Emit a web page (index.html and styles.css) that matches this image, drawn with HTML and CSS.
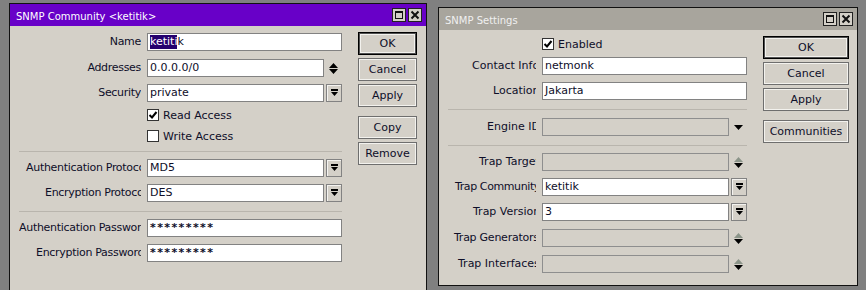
FILE: index.html
```html
<!DOCTYPE html>
<html lang="en">
<head>
    <meta charset="UTF-8">
    <title>SNMP</title>
    <link rel="stylesheet" href="styles.css">
</head>
<body>

<div class="win community">
    <div class="titlebar active">
        <span class="title">SNMP Community &lt;ketitik&gt;</span>
        <div class="tbtns">
            <span class="tbtn"><svg width="10" height="10" viewBox="0 0 10 10"><path d="M1 1h8v8H1z M2 3v5h6V3z" fill="#111" fill-rule="evenodd"/></svg></span>
            <span class="tbtn"><svg width="10" height="10" viewBox="0 0 10 10"><path d="M1.5 1.5l7 7M8.5 1.5l-7 7" stroke="#111" stroke-width="2"/></svg></span>
        </div>
    </div>
    <div class="body">
        <div class="form">
            <div class="row first">
                <div class="lbl">Name</div>
                <div class="field"><div class="input"><span class="sel">ketiti</span>k</div></div>
            </div>
            <div class="row mt8">
                <div class="lbl">Addresses</div>
                <div class="field">
                    <div class="input">0.0.0.0/0</div>
                    <div class="spin"><svg width="9" height="11" viewBox="0 0 9 11"><path d="M4.5 0L9 5H0z M0 6h9L4.5 11z" fill="#000"/></svg></div>
                </div>
            </div>
            <div class="row">
                <div class="lbl">Security</div>
                <div class="field">
                    <div class="input">private</div>
                    <div class="drop"><svg width="7" height="8" viewBox="0 0 7 8"><path d="M0 0h7v2H0z M0 3h7L3.5 7z" fill="#000"/></svg></div>
                </div>
            </div>
            <div class="row check">
                <div class="lbl"></div>
                <div class="field"><span class="box"><svg width="10" height="10" viewBox="0 0 10 10"><path d="M1.5 5l2.5 2.5L8.5 2" stroke="#000" stroke-width="2" fill="none"/></svg></span>Read Access</div>
            </div>
            <div class="row check mt9">
                <div class="lbl"></div>
                <div class="field"><span class="box"></span>Write Access</div>
            </div>
            <div class="sep"></div>
            <div class="row">
                <div class="lbl at-auth-proto">Authentication Protocol</div>
                <div class="field">
                    <div class="input">MD5</div>
                    <div class="drop"><svg width="7" height="8" viewBox="0 0 7 8"><path d="M0 0h7v2H0z M0 3h7L3.5 7z" fill="#000"/></svg></div>
                </div>
            </div>
            <div class="row">
                <div class="lbl at-enc-proto">Encryption Protocol</div>
                <div class="field">
                    <div class="input">DES</div>
                    <div class="drop"><svg width="7" height="8" viewBox="0 0 7 8"><path d="M0 0h7v2H0z M0 3h7L3.5 7z" fill="#000"/></svg></div>
                </div>
            </div>
            <div class="sep"></div>
            <div class="row">
                <div class="lbl at-auth-pass">Authentication Password</div>
                <div class="field"><div class="input pass">*********</div></div>
            </div>
            <div class="row">
                <div class="lbl at-enc-pass">Encryption Password</div>
                <div class="field"><div class="input pass">*********</div></div>
            </div>
        </div>
        <div class="actions">
            <div class="btn default">OK</div>
            <div class="btn">Cancel</div>
            <div class="btn">Apply</div>
            <div class="btn group">Copy</div>
            <div class="btn">Remove</div>
        </div>
    </div>
</div>

<div class="win settings">
    <div class="titlebar">
        <span class="title">SNMP Settings</span>
        <div class="tbtns">
            <span class="tbtn"><svg width="10" height="10" viewBox="0 0 10 10"><path d="M1 1h8v8H1z M2 3v5h6V3z" fill="#111" fill-rule="evenodd"/></svg></span>
            <span class="tbtn"><svg width="10" height="10" viewBox="0 0 10 10"><path d="M1.5 1.5l7 7M8.5 1.5l-7 7" stroke="#111" stroke-width="2"/></svg></span>
        </div>
    </div>
    <div class="body">
        <div class="form">
            <div class="row check first">
                <div class="lbl"></div>
                <div class="field"><span class="box"><svg width="10" height="10" viewBox="0 0 10 10"><path d="M1.5 5l2.5 2.5L8.5 2" stroke="#000" stroke-width="2" fill="none"/></svg></span>Enabled</div>
            </div>
            <div class="row">
                <div class="lbl at-contact">Contact Info</div>
                <div class="field"><div class="input">netmonk</div></div>
            </div>
            <div class="row">
                <div class="lbl at-location">Location</div>
                <div class="field"><div class="input">Jakarta</div></div>
            </div>
            <div class="sep"></div>
            <div class="row mt8">
                <div class="lbl at-engine">Engine ID</div>
                <div class="field">
                    <div class="input off"></div>
                    <div class="spin"><svg width="9" height="5" viewBox="0 0 9 5"><path d="M0 0h9L4.5 5z" fill="#000"/></svg></div>
                </div>
            </div>
            <div class="sep mt10"></div>
            <div class="row">
                <div class="lbl at-target">Trap Target</div>
                <div class="field">
                    <div class="input off"></div>
                    <div class="spin"><svg width="9" height="11" viewBox="0 0 9 11"><path d="M4.5 0L9 5H0z" fill="#8b9489"/><path d="M0 6h9L4.5 11z" fill="#000"/></svg></div>
                </div>
            </div>
            <div class="row">
                <div class="lbl at-community">Trap Community</div>
                <div class="field">
                    <div class="input">ketitik</div>
                    <div class="drop"><svg width="7" height="8" viewBox="0 0 7 8"><path d="M0 0h7v2H0z M0 3h7L3.5 7z" fill="#000"/></svg></div>
                </div>
            </div>
            <div class="row">
                <div class="lbl at-version">Trap Version</div>
                <div class="field">
                    <div class="input">3</div>
                    <div class="drop"><svg width="7" height="8" viewBox="0 0 7 8"><path d="M0 0h7v2H0z M0 3h7L3.5 7z" fill="#000"/></svg></div>
                </div>
            </div>
            <div class="row mt8">
                <div class="lbl at-generators">Trap Generators</div>
                <div class="field">
                    <div class="input off"></div>
                    <div class="spin"><svg width="9" height="11" viewBox="0 0 9 11"><path d="M4.5 0L9 5H0z" fill="#8b9489"/><path d="M0 6h9L4.5 11z" fill="#000"/></svg></div>
                </div>
            </div>
            <div class="row mt8">
                <div class="lbl at-interface">Trap Interfaces</div>
                <div class="field">
                    <div class="input off"></div>
                    <div class="spin"><svg width="9" height="11" viewBox="0 0 9 11"><path d="M4.5 0L9 5H0z" fill="#8b9489"/><path d="M0 6h9L4.5 11z" fill="#000"/></svg></div>
                </div>
            </div>
        </div>
        <div class="actions">
            <div class="btn default">OK</div>
            <div class="btn">Cancel</div>
            <div class="btn">Apply</div>
            <div class="btn group">Communities</div>
        </div>
    </div>
</div>

</body>
</html>
```

FILE: styles.css
```css
body {
    margin: 0;
    background-color: #808080;
    font-family: 'DejaVu Sans', sans-serif;
    font-size: 11px;
    color: #0e0e28;
    overflow: hidden;
}

/* windows on the desktop */
.win {
    position: absolute;
    box-sizing: border-box;
    border: 1px solid #111;
    background-color: #d4d0c8;
}

.community {
    left: 9px;
    top: 3px;
    width: 418px;
    height: 300px;
}

.settings {
    left: 438px;
    top: 7px;
    width: 420px;
    height: 279px;
}

.titlebar {
    height: 22px;
    display: flex;
    align-items: center;
    justify-content: space-between;
    padding: 0 4px 0 6px;
    background-color: #a8a59d;
    color: #f0f0f0;
}

.titlebar.active {
    background-color: #6800c8;
    color: #fff;
}

.title {
    font-size: 10px;
    padding-top: 3px;
}

.tbtns {
    display: flex;
    gap: 2px;
}

.tbtn {
    width: 14px;
    height: 14px;
    box-sizing: border-box;
    border: 1px solid #222;
    background-color: #d4d0c8;
    display: flex;
    align-items: center;
    justify-content: center;
}

.body {
    display: flex;
    align-items: flex-start;
    padding: 6px 8px 0 9px;
}

.form {
    display: flex;
    flex-direction: column;
}

.row {
    display: flex;
    align-items: center;
    height: 18px;
    margin-top: 7px;
}

.row.first {
    margin-top: 1px;
}

.settings .row.first {
    margin-top: 2px;
}

.row.check {
    height: 12px;
}

.mt8 { margin-top: 8px; }
.mt9 { margin-top: 9px; }
.mt10 { margin-top: 10px; }

.lbl {
    width: 122px;
    flex: none;
    box-sizing: border-box;
    overflow: hidden;
    white-space: nowrap;
    text-align: right;
    line-height: 18px;
    letter-spacing: -0.3px;
}

.settings .lbl {
    width: 88px;
    letter-spacing: 0;
}

/* clipped labels start where the original dialog puts them */
.at-auth-proto { padding-left: 7px; }
.at-enc-proto { padding-left: 26px; }
.at-auth-pass { padding-left: 0; }
.at-enc-pass { padding-left: 17px; }
.at-contact { padding-left: 24px; }
.at-location { padding-left: 45px; }
.at-engine { padding-left: 39px; }
.at-target { padding-left: 31px; }
.at-version { padding-left: 25px; }
.at-interface { padding-left: 10px; }

.settings .at-community {
    padding-left: 7px;
    letter-spacing: -0.4px;
}

.settings .at-generators {
    padding-left: 6px;
    letter-spacing: -0.25px;
}

.field {
    width: 195px;
    margin-left: 6px;
    display: flex;
    align-items: center;
    white-space: nowrap;
}

.settings .field {
    width: 205px;
}

.input {
    flex: 1;
    height: 18px;
    box-sizing: border-box;
    border: 1px solid #828282;
    background-color: #fff;
    padding: 0 2px;
    line-height: 16px;
    overflow: hidden;
    white-space: nowrap;
}

.input.off {
    background-color: #d4d0c8;
    border-color: #8e8e8e;
}

.input.pass {
    letter-spacing: 1.4px;
    font-weight: bold;
}

.sel {
    background-color: #24006e;
    color: #fff;
    display: inline-block;
    line-height: 14px;
}

.spin {
    width: 18px;
    height: 18px;
    flex: none;
    display: flex;
    align-items: center;
    justify-content: center;
}

.drop {
    width: 16px;
    height: 18px;
    flex: none;
    margin-left: 2px;
    box-sizing: border-box;
    border: 1px solid #828282;
    box-shadow: inset 1px 1px 0 #f4f3f0;
    display: flex;
    align-items: center;
    justify-content: center;
}

.box {
    width: 12px;
    height: 12px;
    flex: none;
    box-sizing: border-box;
    border: 1px solid #333;
    background-color: #fff;
    margin-right: 4px;
    display: flex;
    align-items: center;
    justify-content: center;
}

.sep {
    height: 1px;
    margin-top: 9px;
    background-color: #b9b5ad;
}

.actions {
    margin-left: 16px;
    width: 59px;
    display: flex;
    flex-direction: column;
    gap: 3px;
}

.settings .actions {
    width: 86px;
}

.btn {
    height: 23px;
    box-sizing: border-box;
    border: 1px solid #6e6e6e;
    box-shadow: inset 0 0 0 1px #f3f2ee;
    text-align: center;
    line-height: 21px;
}

.btn.default {
    border-color: #000;
    box-shadow: inset 0 0 0 1px #505050, inset 0 0 0 2px #f3f2ee;
}

.btn.group {
    margin-top: 6px;
}
```
